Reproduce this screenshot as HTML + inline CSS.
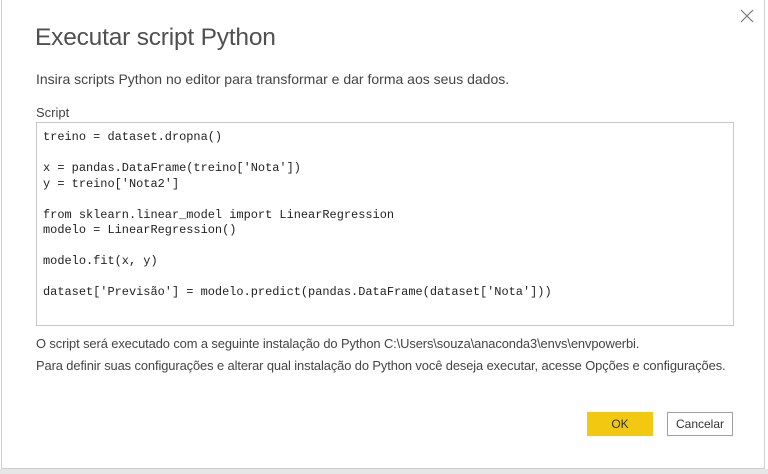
<!DOCTYPE html>
<html><head><meta charset="utf-8"><style>
html,body{margin:0;padding:0;}
body{width:768px;height:474px;background:#fff;position:relative;overflow:hidden;font-family:"Liberation Sans",sans-serif;}
.frame{position:absolute;left:1px;top:0;width:764px;height:469px;border:1px solid #cfcfcf;border-top:none;box-sizing:border-box;background:#fff;}
.shadow{position:absolute;left:0;top:469px;width:768px;height:5px;background:#e6e6e6;}
.title{position:absolute;left:35px;top:24px;font-size:24.5px;color:#505050;font-weight:300;letter-spacing:-0.2px;}
.sub{position:absolute;left:36px;top:71px;font-size:14px;color:#444;}
.lab{position:absolute;left:36px;top:105px;font-size:13px;color:#444;}
.box{position:absolute;left:36px;top:122px;width:698px;height:204px;border:1px solid #c8c8c8;box-sizing:border-box;}
pre{margin:0;position:absolute;left:6px;top:7px;font-family:"Liberation Mono",monospace;font-size:11.95px;line-height:15.5px;color:#222;}
.f{position:absolute;left:36px;font-size:12.9px;color:#444;white-space:nowrap;letter-spacing:-0.1px;}
.btn{position:absolute;top:412px;width:66px;height:24px;box-sizing:border-box;font-size:12px;text-align:center;line-height:22px;color:#333;}
.ok{left:587px;background:#f2c811;border:1px solid #f2c811;}
.cn{left:667px;border:1px solid #a0a0a0;background:#fff;}
.x{position:absolute;left:740px;top:9px;}
</style></head><body>
<div class="frame"></div>
<div class="shadow"></div>
<svg class="x" width="14" height="14" viewBox="0 0 14 14"><path d="M1 1L13 13M13 1L1 13" stroke="#777" stroke-width="1.2"/></svg>
<div class="title">Executar script Python</div>
<div class="sub">Insira scripts Python no editor para transformar e dar forma aos seus dados.</div>
<div class="lab">Script</div>
<div class="box"><pre>treino = dataset.dropna()

x = pandas.DataFrame(treino['Nota'])
y = treino['Nota2']

from sklearn.linear_model import LinearRegression
modelo = LinearRegression()

modelo.fit(x, y)

dataset['Previsão'] = modelo.predict(pandas.DataFrame(dataset['Nota']))</pre></div>
<div class="f" style="top:336px">O script será executado com a seguinte instalação do Python C:\Users\souza\anaconda3\envs\envpowerbi.</div>
<div class="f" style="top:358px">Para definir suas configurações e alterar qual instalação do Python você deseja executar, acesse Opções e configurações.</div>
<div class="btn ok">OK</div>
<div class="btn cn">Cancelar</div>
</body></html>
